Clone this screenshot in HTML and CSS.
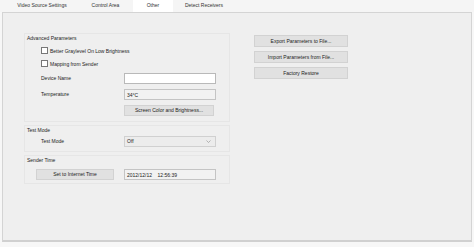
FILE: index.html
```html
<!DOCTYPE html>
<html lang="en">
<head>
    <meta charset="UTF-8">
    <title>Other</title>
    <link rel="stylesheet" href="styles.css">
</head>
<body>
    <div class="tabs">
        <div class="tab tab-video">Video Source Settings</div>
        <div class="tab tab-control">Control Area</div>
        <div class="tab tab-other active">Other</div>
        <div class="tab tab-detect">Detect Receivers</div>
    </div>
    <div class="pane">
        <div class="left">
            <div class="group group-adv">
                <div class="group-title">Advanced Parameters</div>
                <label class="check"><span class="box"></span>Better Graylevel On Low Brightness</label>
                <label class="check"><span class="box"></span>Mapping from Sender</label>
                <div class="row">
                    <span class="lbl">Device Name</span>
                    <div class="field white"></div>
                </div>
                <div class="row">
                    <span class="lbl">Temperature</span>
                    <div class="field readonly">34°C</div>
                </div>
                <div class="row">
                    <span class="lbl"></span>
                    <button class="btn btn-screen">Screen Color and Brightness...</button>
                </div>
            </div>
            <div class="group group-test">
                <div class="group-title">Test Mode</div>
                <div class="row">
                    <span class="lbl">Test Mode</span>
                    <div class="field combo">Off
                        <svg width="5" height="3" viewBox="0 0 5 3"><path d="M0.5 0.5 L2.5 2.5 L4.5 0.5" fill="none" stroke="#999" stroke-width="0.7"/></svg>
                    </div>
                </div>
            </div>
            <div class="group group-time">
                <div class="group-title">Sender Time</div>
                <div class="row">
                    <button class="btn btn-time">Set to Internet Time</button>
                    <div class="field readonly">2012/12/12&nbsp;&nbsp;&nbsp;&nbsp;12:56:39</div>
                </div>
            </div>
        </div>
        <div class="right">
            <button class="btn btn-side">Export Parameters to File...</button>
            <button class="btn btn-side">Import Parameters from File...</button>
            <button class="btn btn-side">Factory Restore</button>
        </div>
    </div>
</body>
</html>
```

FILE: styles.css
```css
body {
    margin: 0;
    background: #f7f7f7;
    font-family: "Liberation Sans", Arial, sans-serif;
    font-size: 5px;
    color: #222;
}
.tabs {
    display: flex;
    height: 12px;
    padding-left: 6px;
    background: #f5f5f5;
}
.tab {
    height: 11px;
    line-height: 11px;
    text-align: center;
    color: #333;
}
.tab-video { width: 72px; }
.tab-control { width: 55px; }
.tab-other { width: 40px; }
.tab-detect { width: 62px; }
.tab.active {
    background: #ffffff;
    height: 12px;
    line-height: 11px;
}
.pane {
    height: 230px;
    margin: 0 2px 0 2px;
    border: 1px solid #d4d4d4;
    border-bottom: 2px solid #d0d0d0;
    background: #efefef;
    box-sizing: border-box;
    padding: 20px 0 0 21px;
    display: flex;
    gap: 24px;
}
.left {
    width: 206px;
    display: flex;
    flex-direction: column;
    gap: 3px;
}
.group {
    border: 1px solid #e6e6e6;
    box-sizing: border-box;
    padding: 1px 0 0 2px;
}
.group-adv { height: 89px; }
.group-test { height: 27px; }
.group-time { height: 29px; }
.group-title {
    height: 7px;
    line-height: 7px;
    color: #222;
}
.check {
    display: flex;
    align-items: center;
    height: 13px;
    padding-left: 14px;
    margin-top: 2px;
}
.check + .check { margin-top: 0; }
.box {
    width: 5px;
    height: 5px;
    border: 1px solid #777;
    background: #fff;
    margin-right: 2px;
}
.row {
    display: flex;
    align-items: center;
    height: 16px;
}
.lbl {
    width: 97px;
    padding-left: 14px;
    box-sizing: border-box;
}
.field {
    width: 92px;
    height: 11px;
    line-height: 11px;
    box-sizing: border-box;
    border: 1px solid #b9b9b9;
    padding-left: 2px;
}
.white { background: #fff; }
.readonly {
    background: #f2f2f2;
    border-color: #c4c4c4;
}
.combo {
    display: flex;
    justify-content: space-between;
    align-items: center;
    padding-right: 4px;
    background: #ececec;
    border-color: #d0d0d0;
}
.btn {
    font-family: inherit;
    font-size: 5px;
    color: #222;
    background: #e1e1e1;
    border: 1px solid #d2d2d2;
    padding: 0;
    height: 11px;
}
.btn-screen { width: 90px; }
.btn-time {
    width: 78px;
    margin: 0 10px 0 9px;
}
.group-test .row {
    height: 12px;
    margin-top: 1px;
}
.group-time .row {
    height: 12px;
    margin-top: 4px;
}
.right {
    display: flex;
    flex-direction: column;
    gap: 4px;
    padding-top: 2px;
}
.btn-side {
    width: 94px;
    height: 12px;
}
```
